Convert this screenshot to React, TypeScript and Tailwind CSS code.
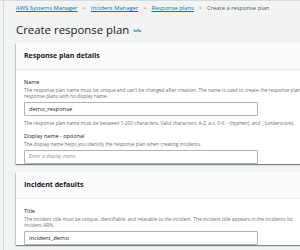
import React from "react";

function Field({
  label,
  desc,
  value,
  placeholder,
  hint,
  gap = "mb-[8px]",
}: {
  label: string;
  desc: string;
  value?: string;
  placeholder?: string;
  hint?: string;
  gap?: string;
}) {
  return (
    <div className={gap}>
      <div className="text-[5.5px] leading-[7px] text-[#16191f]">{label}</div>
      <div className="text-[4.8px] leading-[6px] text-[#687078] mt-[1px] whitespace-pre-line">
        {desc}
      </div>
      <div className="mt-[3px] w-[234px] h-[14px] border border-[#aab7b8] rounded-[1px] bg-white flex items-center px-[4px]">
        {value ? (
          <span className="text-[5.8px] text-[#16191f]">{value}</span>
        ) : (
          <span className="text-[5px] italic text-[#879596]">{placeholder}</span>
        )}
      </div>
      {hint && (
        <div className="text-[4.8px] leading-[6px] text-[#687078] mt-[4px] whitespace-nowrap">
          {hint}
        </div>
      )}
    </div>
  );
}

function Card({ title, children }: { title: string; children: React.ReactNode }) {
  return (
    <div className="bg-white shadow-[0_1px_1px_0_rgba(0,28,36,0.3),1px_1px_1px_0_rgba(0,28,36,0.15),-1px_1px_1px_0_rgba(0,28,36,0.15)] mb-[8px]">
      <div className="h-[27px] flex items-center px-[8px] border-b border-[#eaeded] bg-[#fafafa]">
        <span className="text-[7px] font-bold text-[#16191f]">{title}</span>
      </div>
      <div className="px-[8px] pt-[9px]">{children}</div>
    </div>
  );
}

export default function App() {
  return (
    <div
      className="w-[300px] h-[250px] overflow-hidden bg-[#f2f3f3] border-t border-[#d5dbdb] flex"
      style={{ fontFamily: '"Open Sans", Arial, sans-serif' }}
    >
      <div className="w-[4px] shrink-0 border-r border-[#d5dbdb] bg-[#f2f3f3]" />
      <div className="pl-[12px] flex-1 min-w-0">
        <div className="h-[15px] flex items-center gap-[5px] text-[5.8px] whitespace-nowrap">
          <span className="text-[#0073bb] underline">AWS Systems Manager</span>
          <span className="text-[#545b64]">&gt;</span>
          <span className="text-[#0073bb] underline">Incident Manager</span>
          <span className="text-[#545b64]">&gt;</span>
          <span className="text-[#0073bb] underline">Response plans</span>
          <span className="text-[#545b64]">&gt;</span>
          <span className="text-[#545b64]">Create a response plan</span>
        </div>
        <div className="h-[27px] flex items-center whitespace-nowrap">
          <span className="text-[11.4px] text-[#16191f]">Create response plan</span>
          <span className="text-[4px] font-bold text-[#0073bb] ml-[4px] mt-[3px]">Info</span>
        </div>
        <div className="w-[320px]">
          <Card title="Response plan details">
            <Field
              label="Name"
              desc={
                "The response plan name must be unique and can't be changed after creation. The name is used to create the response plan ARN\nresponse plans with no display name."
              }
              value="demo_response"
              hint="The response plan name must be between 1-200 characters. Valid characters: A-Z, a-z, 0-9, - (hyphen), and _ (underscore)."
              gap="mb-[7px]"
            />
            <Field
              label="Display name - optional"
              desc="The display name helps you identify the response plan when creating incidents."
              placeholder="Enter a display name"
              gap="mb-[8px]"
            />
          </Card>
          <Card title="Incident defaults">
            <Field
              label="Title"
              desc={
                "The incident title must be unique, identifiable, and relatable to the incident. The incident title appears in the incidents list\nincident ARN."
              }
              value="incident_demo"
            />
          </Card>
        </div>
      </div>
    </div>
  );
}
